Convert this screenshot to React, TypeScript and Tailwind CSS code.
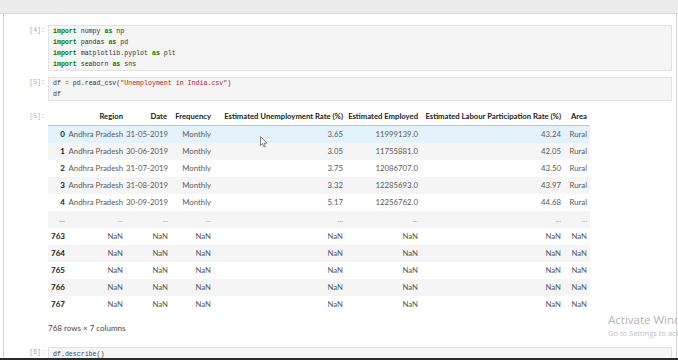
import React from "react";

const rows: string[][] = [
  ["0", "Andhra Pradesh", "31-05-2019", "Monthly", "3.65", "11999139.0", "43.24", "Rural"],
  ["1", "Andhra Pradesh", "30-06-2019", "Monthly", "3.05", "11755881.0", "42.05", "Rural"],
  ["2", "Andhra Pradesh", "31-07-2019", "Monthly", "3.75", "12086707.0", "43.50", "Rural"],
  ["3", "Andhra Pradesh", "31-08-2019", "Monthly", "3.32", "12285693.0", "43.97", "Rural"],
  ["4", "Andhra Pradesh", "30-09-2019", "Monthly", "5.17", "12256762.0", "44.68", "Rural"],
  ["...", "...", "...", "...", "...", "...", "...", "..."],
  ["763", "NaN", "NaN", "NaN", "NaN", "NaN", "NaN", "NaN"],
  ["764", "NaN", "NaN", "NaN", "NaN", "NaN", "NaN", "NaN"],
  ["765", "NaN", "NaN", "NaN", "NaN", "NaN", "NaN", "NaN"],
  ["766", "NaN", "NaN", "NaN", "NaN", "NaN", "NaN", "NaN"],
  ["767", "NaN", "NaN", "NaN", "NaN", "NaN", "NaN", "NaN"],
];

const headers = [
  "",
  "Region",
  "Date",
  "Frequency",
  "Estimated Unemployment Rate (%)",
  "Estimated Employed",
  "Estimated Labour Participation Rate (%)",
  "Area",
];

const colWidths = [20, 58, 44, 44, 132, 75, 143, 26];

function Prompt({ label }: { label: string }) {
  return (
    <div className="w-[44px] shrink-0 pr-[3px] text-right font-['Liberation_Mono',monospace] text-[6.6px] leading-[11px] text-[#a8a8a8]">
      {label}
    </div>
  );
}

function CodeBox({ children }: { children: React.ReactNode }) {
  return (
    <div className="flex-1 mr-[4px] border border-[#e2e2e2] bg-[#f5f5f5] px-[4px] font-['Liberation_Mono',monospace] text-[6.6px] leading-[11px] text-[#333]">
      {children}
    </div>
  );
}

const Kw = ({ children }: { children: React.ReactNode }) => (
  <span className="font-bold text-[#008000]">{children}</span>
);

export default function App() {
  return (
    <div className="relative w-[678px] h-[360px] overflow-hidden bg-white font-['Lato',sans-serif]">
      {/* browser top strip */}
      <div className="h-[14px] bg-[#ececec] border-b border-[#dadada]" />

      <div className="ml-[3px] mr-[1px] h-[344px] border-l border-r border-[#d4d4d4] pt-[11px] overflow-hidden">
        {/* cell 4 */}
        <div className="flex">
          <Prompt label="[4]:" />
          <CodeBox>
            <div><Kw>import</Kw> numpy <Kw>as</Kw> np</div>
            <div><Kw>import</Kw> pandas <Kw>as</Kw> pd</div>
            <div><Kw>import</Kw> matplotlib.pyplot <Kw>as</Kw> plt</div>
            <div><Kw>import</Kw> seaborn <Kw>as</Kw> sns</div>
          </CodeBox>
        </div>

        {/* cell 5 */}
        <div className="flex mt-[6px]">
          <Prompt label="[5]:" />
          <CodeBox>
            <div>
              df <span className="text-[#aa22ff]">=</span> pd.read_csv(
              <span className="text-[#ba2121]">"Unemployment in India.csv"</span>)
            </div>
            <div>df</div>
          </CodeBox>
        </div>

        {/* output 5 */}
        <div className="flex mt-[7px]">
          <div className="w-[44px] shrink-0 pr-[3px] pt-[3px] text-right font-['Liberation_Mono',monospace] text-[6.6px] leading-[11px] text-[#b8b8b8]">
            [5]:
          </div>
          <div>
            <table className="w-[542px] table-fixed border-collapse text-[7.8px] leading-[17px] text-[#5a5a5a]">
              <colgroup>
                {colWidths.map((w, i) => (
                  <col key={i} style={{ width: w }} />
                ))}
              </colgroup>
              <thead>
                <tr className="border-b border-[#c4c4c4]">
                  {headers.map((h, i) => (
                    <th
                      key={i}
                      className="h-[17px] p-0 pr-[3px] text-right text-[7.7px] font-bold text-[#222] whitespace-nowrap"
                    >
                      {h}
                    </th>
                  ))}
                </tr>
              </thead>
              <tbody>
                {rows.map((r, ri) => (
                  <tr
                    key={ri}
                    className={
                      ri === 0 ? "bg-[#e4f2fb]" : ri % 2 === 1 ? "bg-[#f5f5f5]" : "bg-white"
                    }
                  >
                    {r.map((c, ci) => (
                      <td
                        key={ci}
                        className={`h-[17px] p-0 ${ci === 2 ? "pr-[2px]" : "pr-[3px]"} text-right whitespace-nowrap ${
                          ci === 0 ? "text-[8px] font-bold text-[#222]" : ""
                        } ${c === "..." ? "text-[#999]" : ""}`}
                      >
                        {c}
                      </td>
                    ))}
                  </tr>
                ))}
              </tbody>
            </table>
            <div className="mt-[9px] text-[8px] leading-[12px] text-[#444]">768 rows × 7 columns</div>
          </div>
        </div>

        {/* cell 6 */}
        <div className="flex mt-[13px]">
          <Prompt label="[6]:" />
          <CodeBox>
            <div className="pt-[1px]">
              df.<span className="text-[#2a4f7f]">describe</span>()
            </div>
            <div>&nbsp;</div>
          </CodeBox>
        </div>
      </div>

      {/* taskbar edge */}
      <div className="h-[2px] bg-[#2b2b2b]" />

      {/* windows watermark, clipped by the screen edge as in the capture */}
      <div className="absolute left-[608px] top-[312px] w-[70px] overflow-hidden whitespace-nowrap font-['Open_Sans',sans-serif] text-[#b4b4b4]">
        <div className="text-[11.5px] leading-[16px]">Activate Windows</div>
        <div className="text-[7.5px] leading-[11px] text-[#bdbdbd]">Go to Settings to activate Windows.</div>
      </div>

      {/* mouse cursor */}
      <svg className="absolute left-[260px] top-[136px]" width="8" height="12" viewBox="0 0 8 12">
        <path d="M0.5 0.5 L0.5 9.5 L2.6 7.6 L4 11 L5.4 10.4 L4 7.2 L7 7.2 Z" fill="#fff" stroke="#666" strokeWidth="0.8" />
      </svg>
    </div>
  );
}
